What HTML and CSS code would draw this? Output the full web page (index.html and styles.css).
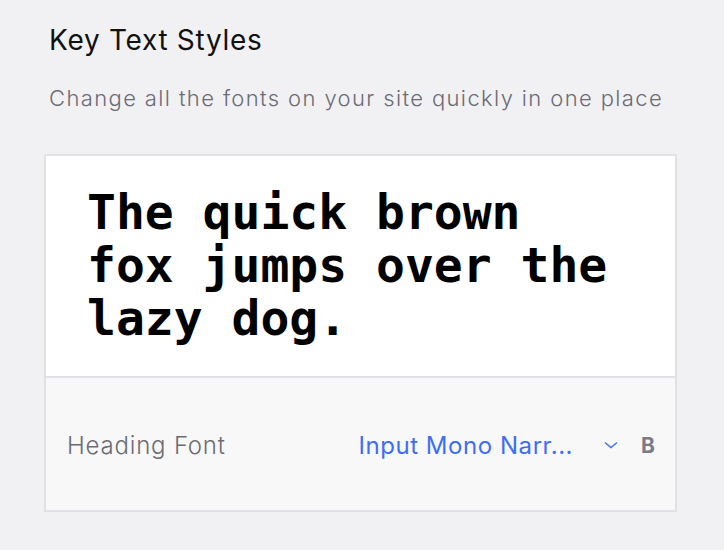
FILE: index.html
```html
<!DOCTYPE html>
<html>
<head>
<meta charset="utf-8">
<link rel="stylesheet" href="styles.css">
</head>
<body>
<div class="panel">
  <div class="header">
    <h1 class="title">Key Text Styles</h1>
    <p class="subtitle">Change all the fonts on your site quickly in one place</p>
  </div>
  <div class="card">
    <div class="preview">The quick brown<br>fox jumps over the<br>lazy dog.</div>
    <div class="footer">
      <span class="label">Heading Font</span>
      <div class="controls">
        <span class="font-name">Input Mono Narr...</span>
        <svg class="chevron" width="14" height="8" viewBox="0 0 14 8"><path d="M1 1.5 L7 6.5 L13 1.5" fill="none" stroke="#3d6ef7" stroke-width="1.4"/></svg>
        <span class="bold">B</span>
      </div>
    </div>
  </div>
</div>
</body>
</html>
```
FILE: styles.css
```css
* { box-sizing: border-box; }
html, body { margin: 0; padding: 0; }
body {
  background: #f1f1f3;
  font-family: Inter, "Liberation Sans", sans-serif;
  width: 724px;
  height: 550px;
  overflow: hidden;
}
.panel {
  padding: 23px 47px 0 44px;
}
.header {
  padding-left: 5px;
}
.title {
  margin: 0;
  font-size: 28px;
  font-weight: 400;
  letter-spacing: 0.7px;
  line-height: 34px;
  color: #111;
}
.subtitle {
  margin: 26px 0 0;
  font-size: 22px;
  font-weight: 300;
  letter-spacing: 1.38px;
  line-height: 30px;
  color: #6b6b75;
}
.card {
  margin-top: 41px;
  width: 633px;
  border: 2px solid #e1e1e5;
  background: #fff;
}
.preview {
  padding: 30px 20px 31px 41px;
  font-family: "DejaVu Sans Mono", "Liberation Mono", monospace;
  font-weight: 700;
  font-size: 48px;
  line-height: 53px;
  color: #000;
}
.footer {
  border-top: 2px solid #e1e1e5;
  background: #f8f8f8;
  height: 134px;
  display: flex;
  align-items: center;
  justify-content: space-between;
  padding: 2px 20px 0 21px;
}
.label {
  font-size: 24px;
  font-weight: 300;
  letter-spacing: 0.8px;
  color: #6b6b75;
}
.controls {
  display: flex;
  align-items: center;
}
.font-name {
  font-size: 24px;
  font-weight: 400;
  letter-spacing: 0.55px;
  color: #3d6ef7;
}
.chevron {
  margin-left: 31px;
}
.bold {
  margin-left: 23px;
  font-size: 21px;
  font-weight: 700;
  color: #7b7b87;
}
```
